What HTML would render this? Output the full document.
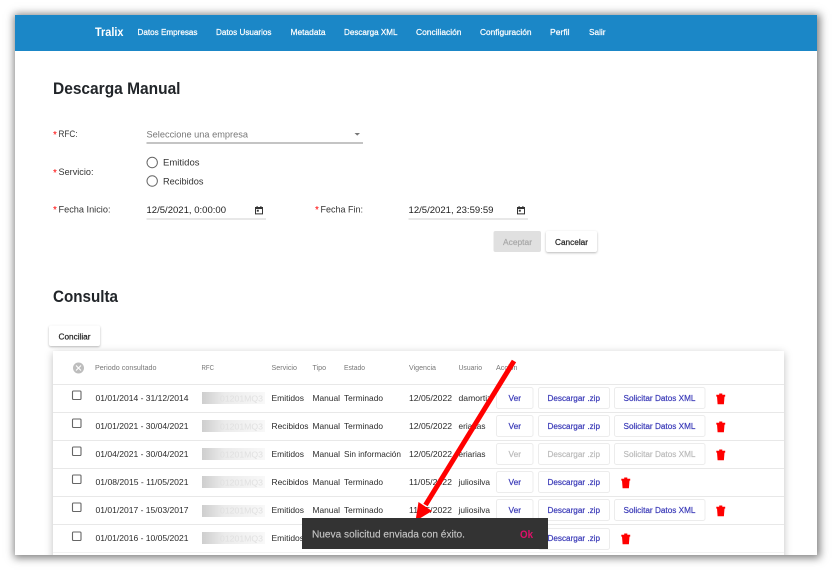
<!DOCTYPE html>
<html lang="es"><head><meta charset="utf-8"><title>Tralix</title>
<style>
html,body{margin:0;padding:0;width:832px;height:570px;overflow:hidden;background:#fff}
.win{position:absolute;left:15px;top:15px;width:802px;height:540px;background:#fff;overflow:hidden;z-index:1}
.sh{position:absolute;left:15px;top:15px;width:802px;height:540px;box-shadow:1px 1px 8px 2px rgba(0,0,0,.5)}
.card{position:absolute;left:38px;top:336px;width:731px;height:230px;background:#fff;box-shadow:0 2px 8px rgba(0,0,0,.25)}
svg{position:absolute;left:-15px;top:-15px;filter:blur(.35px)}
text{font-family:"Liberation Sans",sans-serif;font-size:8.5px;fill:#2b2b2b}
.nav{fill:#fff;stroke:#fff;stroke-width:.22px;font-size:8.5px}
.h{font-size:16.5px;font-weight:bold;fill:#212529}
.l{font-size:9.5px;fill:#333}
.st{fill:#f00;font-size:10px}
.v{font-size:9.5px;fill:#222}
.th{font-size:7.5px;fill:#777}
.b{stroke:#3b3bb8;stroke-width:.2px;font-size:8px;fill:#3b3bb8}
.d{stroke:#bbb;stroke-width:.2px;font-size:8px;fill:#bbb}
.k{stroke:#222;stroke-width:.2px;font-size:8px;fill:#222}
.btn{fill:#fff;stroke:#ececec;stroke-width:1}
.rl{stroke:#e8e8e8;stroke-width:1}
.r{fill:#e0e0e0;font-size:8.5px}
.rs{filter:drop-shadow(0 1px 1px rgba(0,0,0,.28));fill:#fff}
</style></head><body>
<div class="sh"></div>
<div class="win">
<div class="card"></div>
<svg width="832" height="570" viewBox="0 0 832 570" xmlns="http://www.w3.org/2000/svg">
<defs>
<linearGradient id="g"><stop offset="0" stop-color="#cecece"/><stop offset=".35" stop-color="#ebebeb"/><stop offset="1" stop-color="#f8f8f8"/></linearGradient>
<g id="tr"><path fill="#f00" d="M.3 1.8h8.9v1.8H.3zM3.2 .5h3.1v1.6H3.2zM1 3.4h7.5L7.9 11.3H1.6z"/></g>
<g id="cb"><rect x="72.5" y="0" width="8.5" height="8.5" rx="1" fill="#fff" stroke="#666" stroke-width="1.1"/></g>
<g id="cal"><path fill="#333" d="M0 1h8v7.4H0zM1 3v4.4h6V3zM1.6 0h1v1.4h-1zM5.4 0h1v1.4h-1zM1.8 3.8h2v1.8h-2z"/></g>
</defs>

<rect x="15" y="15" width="802" height="36" fill="#1b87c7"/>
<text x="95" y="36" class="nav" style="font-size:12px;font-weight:bold;stroke-width:0" textLength="28.5" lengthAdjust="spacingAndGlyphs">Tralix</text>
<text x="137.5" y="35" class="nav" textLength="60" lengthAdjust="spacingAndGlyphs">Datos Empresas</text>
<text x="216" y="35" class="nav" textLength="55.5" lengthAdjust="spacingAndGlyphs">Datos Usuarios</text>
<text x="290.5" y="35" class="nav" textLength="35" lengthAdjust="spacingAndGlyphs">Metadata</text>
<text x="344" y="35" class="nav" textLength="53.5" lengthAdjust="spacingAndGlyphs">Descarga XML</text>
<text x="416" y="35" class="nav" textLength="45.5" lengthAdjust="spacingAndGlyphs">Conciliación</text>
<text x="480" y="35" class="nav" textLength="51.5" lengthAdjust="spacingAndGlyphs">Configuración</text>
<text x="550" y="35" class="nav" textLength="19.5" lengthAdjust="spacingAndGlyphs">Perfil</text>
<text x="589" y="35" class="nav" textLength="16.5" lengthAdjust="spacingAndGlyphs">Salir</text>

<text x="53" y="94" class="h" textLength="127.5" lengthAdjust="spacingAndGlyphs">Descarga Manual</text>

<text x="53" y="138" class="st">*</text>
<text x="58.5" y="137" class="l" textLength="19" lengthAdjust="spacingAndGlyphs">RFC:</text>
<text x="146.5" y="137.5" class="l" style="fill:#777" textLength="101.5" lengthAdjust="spacingAndGlyphs">Seleccione una empresa</text>
<path d="M354.5 133h5.5l-2.75 2.6z" fill="#777"/>
<rect x="146.5" y="142.5" width="216.5" height="1" fill="#888"/>

<text x="53" y="176" class="st">*</text>
<text x="58.5" y="175" class="l" textLength="35" lengthAdjust="spacingAndGlyphs">Servicio:</text>
<circle cx="152.2" cy="162.5" r="5.2" fill="none" stroke="#666" stroke-width="1"/>
<circle cx="152.2" cy="181" r="5.2" fill="none" stroke="#666" stroke-width="1"/>
<text x="163" y="165.5" class="l" textLength="36.5" lengthAdjust="spacingAndGlyphs">Emitidos</text>
<text x="163" y="184.5" class="l" textLength="40.5" lengthAdjust="spacingAndGlyphs">Recibidos</text>

<text x="53" y="213" class="st">*</text>
<text x="58.5" y="212.5" class="l" textLength="52" lengthAdjust="spacingAndGlyphs">Fecha Inicio:</text>
<text x="146.5" y="213" class="v" textLength="79.5" lengthAdjust="spacingAndGlyphs">12/5/2021, 0:00:00</text>
<use href="#cal" x="255" y="206"/>
<rect x="146.5" y="218.5" width="119.5" height="1" fill="#d2d2d2"/>

<text x="315" y="213" class="st">*</text>
<text x="320.5" y="212.5" class="l" textLength="42.5" lengthAdjust="spacingAndGlyphs">Fecha Fin:</text>
<text x="408.5" y="213" class="v" textLength="85" lengthAdjust="spacingAndGlyphs">12/5/2021, 23:59:59</text>
<use href="#cal" x="517" y="206"/>
<rect x="408.5" y="218.5" width="119.5" height="1" fill="#d2d2d2"/>

<rect x="493.5" y="231" width="47.5" height="21" rx="2" fill="#e0e0e0"/>
<text x="503" y="245" class="d" style="fill:#a8a8a8;stroke:#a8a8a8" textLength="29" lengthAdjust="spacingAndGlyphs">Aceptar</text>
<rect x="546" y="231" width="51" height="21" rx="2" class="rs"/>
<text x="555" y="245" class="k" textLength="33" lengthAdjust="spacingAndGlyphs">Cancelar</text>

<text x="53" y="302" class="h" textLength="65" lengthAdjust="spacingAndGlyphs">Consulta</text>
<rect x="49" y="325.5" width="51" height="20.5" rx="2" class="rs"/>
<text x="58.5" y="339.5" class="k" textLength="32" lengthAdjust="spacingAndGlyphs">Conciliar</text>

<!-- table header -->
<circle cx="78.5" cy="368" r="5.5" fill="#bdbdbd"/>
<path d="M76 365.5l5 5M81 365.5l-5 5" stroke="#fff" stroke-width="1.1"/>
<text x="95" y="370" class="th" textLength="61.5" lengthAdjust="spacingAndGlyphs">Periodo consultado</text>
<text x="201.5" y="370" class="th" textLength="12.5" lengthAdjust="spacingAndGlyphs">RFC</text>
<text x="271.5" y="370" class="th" textLength="25.5" lengthAdjust="spacingAndGlyphs">Servicio</text>
<text x="312.5" y="370" class="th" textLength="13.5" lengthAdjust="spacingAndGlyphs">Tipo</text>
<text x="344" y="370" class="th" textLength="21" lengthAdjust="spacingAndGlyphs">Estado</text>
<text x="409" y="370" class="th" textLength="27" lengthAdjust="spacingAndGlyphs">Vigencia</text>
<text x="458.5" y="370" class="th" textLength="23.5" lengthAdjust="spacingAndGlyphs">Usuario</text>
<text x="496" y="370" class="th" textLength="21.5" lengthAdjust="spacingAndGlyphs">Acción</text>

<!-- row lines -->
<path class="rl" d="M53 384.5H784M53 412.5H784M53 440.5H784M53 468.5H784M53 496.5H784M53 524.5H784"/>
<path stroke="#f3f3f3" d="M53 552.5H784"/>

<!-- row 1 -->
<use href="#cb" y="391"/>
<text x="95.5" y="401" textLength="93" lengthAdjust="spacingAndGlyphs">01/01/2014 - 31/12/2014</text>
<rect x="202" y="392" width="63" height="12" fill="url(#g)"/><text x="220" y="401.5" class="r" textLength="43" lengthAdjust="spacingAndGlyphs">01201MQ3</text>
<text x="271.5" y="401" textLength="32.5" lengthAdjust="spacingAndGlyphs">Emitidos</text>
<text x="312.5" y="401" textLength="27.5" lengthAdjust="spacingAndGlyphs">Manual</text>
<text x="344" y="401" textLength="39" lengthAdjust="spacingAndGlyphs">Terminado</text>
<text x="409" y="401" textLength="43" lengthAdjust="spacingAndGlyphs">12/05/2022</text>
<text x="458.5" y="401" textLength="33" lengthAdjust="spacingAndGlyphs">damortiz</text>
<rect x="496.5" y="387.5" width="36.5" height="21" rx="2" class="btn"/><text x="508.5" y="401" class="b" textLength="12.5" lengthAdjust="spacingAndGlyphs">Ver</text>
<rect x="538.5" y="387.5" width="71" height="21" rx="2" class="btn"/><text x="547.5" y="401" class="b" textLength="52.5" lengthAdjust="spacingAndGlyphs">Descargar .zip</text>
<rect x="614.5" y="387.5" width="90.5" height="21" rx="2" class="btn"/><text x="623.5" y="401" class="b" textLength="72" lengthAdjust="spacingAndGlyphs">Solicitar Datos XML</text>
<use href="#tr" x="716" y="393"/>

<!-- row 2 -->
<use href="#cb" y="419"/>
<text x="95.5" y="429" textLength="93" lengthAdjust="spacingAndGlyphs">01/01/2021 - 30/04/2021</text>
<rect x="202" y="420" width="63" height="12" fill="url(#g)"/><text x="220" y="429.5" class="r" textLength="43" lengthAdjust="spacingAndGlyphs">01201MQ3</text>
<text x="271.5" y="429" textLength="37" lengthAdjust="spacingAndGlyphs">Recibidos</text>
<text x="312.5" y="429" textLength="27.5" lengthAdjust="spacingAndGlyphs">Manual</text>
<text x="344" y="429" textLength="39" lengthAdjust="spacingAndGlyphs">Terminado</text>
<text x="409" y="429" textLength="43" lengthAdjust="spacingAndGlyphs">12/05/2022</text>
<text x="458.5" y="429" textLength="27" lengthAdjust="spacingAndGlyphs">eriarias</text>
<rect x="496.5" y="415.5" width="36.5" height="21" rx="2" class="btn"/><text x="508.5" y="429" class="b" textLength="12.5" lengthAdjust="spacingAndGlyphs">Ver</text>
<rect x="538.5" y="415.5" width="71" height="21" rx="2" class="btn"/><text x="547.5" y="429" class="b" textLength="52.5" lengthAdjust="spacingAndGlyphs">Descargar .zip</text>
<rect x="614.5" y="415.5" width="90.5" height="21" rx="2" class="btn"/><text x="623.5" y="429" class="b" textLength="72" lengthAdjust="spacingAndGlyphs">Solicitar Datos XML</text>
<use href="#tr" x="716" y="421"/>

<!-- row 3 -->
<use href="#cb" y="447"/>
<text x="95.5" y="457" textLength="93" lengthAdjust="spacingAndGlyphs">01/04/2021 - 30/04/2021</text>
<rect x="202" y="448" width="63" height="12" fill="url(#g)"/><text x="220" y="457.5" class="r" textLength="43" lengthAdjust="spacingAndGlyphs">01201MQ3</text>
<text x="271.5" y="457" textLength="32.5" lengthAdjust="spacingAndGlyphs">Emitidos</text>
<text x="312.5" y="457" textLength="27.5" lengthAdjust="spacingAndGlyphs">Manual</text>
<text x="344" y="457" textLength="57" lengthAdjust="spacingAndGlyphs">Sin información</text>
<text x="409" y="457" textLength="43" lengthAdjust="spacingAndGlyphs">12/05/2022</text>
<text x="458.5" y="457" textLength="27" lengthAdjust="spacingAndGlyphs">eriarias</text>
<rect x="496.5" y="443.5" width="36.5" height="21" rx="2" class="btn"/><text x="508.5" y="457" class="d" textLength="12.5" lengthAdjust="spacingAndGlyphs">Ver</text>
<rect x="538.5" y="443.5" width="71" height="21" rx="2" class="btn"/><text x="547.5" y="457" class="d" textLength="52.5" lengthAdjust="spacingAndGlyphs">Descargar .zip</text>
<rect x="614.5" y="443.5" width="90.5" height="21" rx="2" class="btn"/><text x="623.5" y="457" class="d" textLength="72" lengthAdjust="spacingAndGlyphs">Solicitar Datos XML</text>
<use href="#tr" x="716" y="449"/>

<!-- row 4 -->
<use href="#cb" y="475"/>
<text x="95.5" y="485" textLength="93" lengthAdjust="spacingAndGlyphs">01/08/2015 - 11/05/2021</text>
<rect x="202" y="476" width="63" height="12" fill="url(#g)"/><text x="220" y="485.5" class="r" textLength="43" lengthAdjust="spacingAndGlyphs">01201MQ3</text>
<text x="271.5" y="485" textLength="37" lengthAdjust="spacingAndGlyphs">Recibidos</text>
<text x="312.5" y="485" textLength="27.5" lengthAdjust="spacingAndGlyphs">Manual</text>
<text x="344" y="485" textLength="39" lengthAdjust="spacingAndGlyphs">Terminado</text>
<text x="409" y="485" textLength="43" lengthAdjust="spacingAndGlyphs">11/05/2022</text>
<text x="458.5" y="485" textLength="31.5" lengthAdjust="spacingAndGlyphs">juliosilva</text>
<rect x="496.5" y="471.5" width="36.5" height="21" rx="2" class="btn"/><text x="508.5" y="485" class="b" textLength="12.5" lengthAdjust="spacingAndGlyphs">Ver</text>
<rect x="538.5" y="471.5" width="71" height="21" rx="2" class="btn"/><text x="547.5" y="485" class="b" textLength="52.5" lengthAdjust="spacingAndGlyphs">Descargar .zip</text>
<use href="#tr" x="621" y="477"/>

<!-- row 5 -->
<use href="#cb" y="503"/>
<text x="95.5" y="513" textLength="93" lengthAdjust="spacingAndGlyphs">01/01/2017 - 15/03/2017</text>
<rect x="202" y="505" width="63" height="12" fill="url(#g)"/><text x="220" y="513.5" class="r" textLength="43" lengthAdjust="spacingAndGlyphs">01201MQ3</text>
<text x="271.5" y="513" textLength="32.5" lengthAdjust="spacingAndGlyphs">Emitidos</text>
<text x="312.5" y="513" textLength="27.5" lengthAdjust="spacingAndGlyphs">Manual</text>
<text x="344" y="513" textLength="39" lengthAdjust="spacingAndGlyphs">Terminado</text>
<text x="409" y="513" textLength="43" lengthAdjust="spacingAndGlyphs">11/05/2022</text>
<text x="458.5" y="513" textLength="31.5" lengthAdjust="spacingAndGlyphs">juliosilva</text>
<rect x="496.5" y="499.5" width="36.5" height="21" rx="2" class="btn"/><text x="508.5" y="513" class="b" textLength="12.5" lengthAdjust="spacingAndGlyphs">Ver</text>
<rect x="538.5" y="499.5" width="71" height="21" rx="2" class="btn"/><text x="547.5" y="513" class="b" textLength="52.5" lengthAdjust="spacingAndGlyphs">Descargar .zip</text>
<rect x="614.5" y="499.5" width="90.5" height="21" rx="2" class="btn"/><text x="623.5" y="513" class="b" textLength="72" lengthAdjust="spacingAndGlyphs">Solicitar Datos XML</text>
<use href="#tr" x="716" y="505"/>

<!-- row 6 -->
<use href="#cb" y="532"/>
<text x="95.5" y="541" textLength="93" lengthAdjust="spacingAndGlyphs">01/01/2016 - 10/05/2021</text>
<rect x="202" y="532" width="63" height="12" fill="url(#g)"/><text x="220" y="541.5" class="r" textLength="43" lengthAdjust="spacingAndGlyphs">01201MQ3</text>
<text x="271.5" y="541" textLength="32.5" lengthAdjust="spacingAndGlyphs">Emitidos</text>
<rect x="538.5" y="528.5" width="71" height="21" rx="2" class="btn"/><text x="547.5" y="541" class="b" textLength="52.5" lengthAdjust="spacingAndGlyphs">Descargar .zip</text>
<use href="#tr" x="621" y="533"/>

<!-- arrow -->
<path d="M514 361L425.5 505" stroke="#f00" stroke-width="5" fill="none"/>
<path d="M415.5 521L418.5 502L432 511z" fill="#f00"/>

<!-- snackbar -->
<rect x="302" y="518" width="246" height="31" fill="#333"/>
<text x="312" y="537.5" style="font-size:10.5px;fill:#c4c4c4;stroke:#c4c4c4;stroke-width:.15px" textLength="153" lengthAdjust="spacingAndGlyphs">Nueva solicitud enviada con éxito.</text>
<text x="520" y="538" style="font-size:11px;font-weight:bold;fill:#e0106a" textLength="13" lengthAdjust="spacingAndGlyphs">Ok</text>
</svg>
</div>
</body></html>
